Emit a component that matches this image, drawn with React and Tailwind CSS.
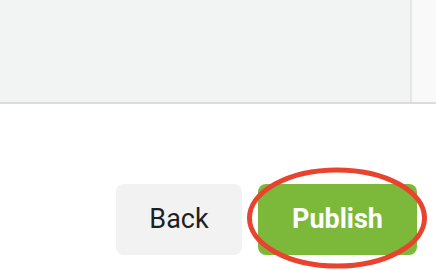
import React from 'react';

const App = () => {
  return (
    <div className="w-[436px] h-[270px] bg-white overflow-hidden" style={{ fontFamily: 'Roboto, "Liberation Sans", sans-serif' }}>
      {/* editor area */}
      <div className="flex h-[104px] border-b-2 border-[#dcdcdc]">
        <div className="flex-1 bg-[#f2f3f3]" />
        <div className="w-[26px] border-l-2 border-[#e6e6e6] bg-[#f9f9f9]" />
      </div>

      {/* footer actions */}
      <div className="flex justify-end gap-4 pt-[80px] pr-[19px]">
        <button className="w-[126px] h-[71px] rounded-lg bg-[#f2f2f2] text-[27px] text-[#1f1f1f]">
          Back
        </button>
        <div className="relative">
          <button className="w-[159px] h-[71px] rounded-lg bg-[#7cb93a] text-[27px] font-bold text-white">
            Publish
          </button>
          <svg
            className="absolute pointer-events-none"
            style={{ left: -12, top: -17 }}
            width="182"
            height="104"
            viewBox="0 0 182 104"
          >
            <ellipse cx="91" cy="51" rx="87.5" ry="48" fill="none" stroke="#e8432e" strokeWidth="5" />
          </svg>
        </div>
      </div>
    </div>
  );
};

export default App;
